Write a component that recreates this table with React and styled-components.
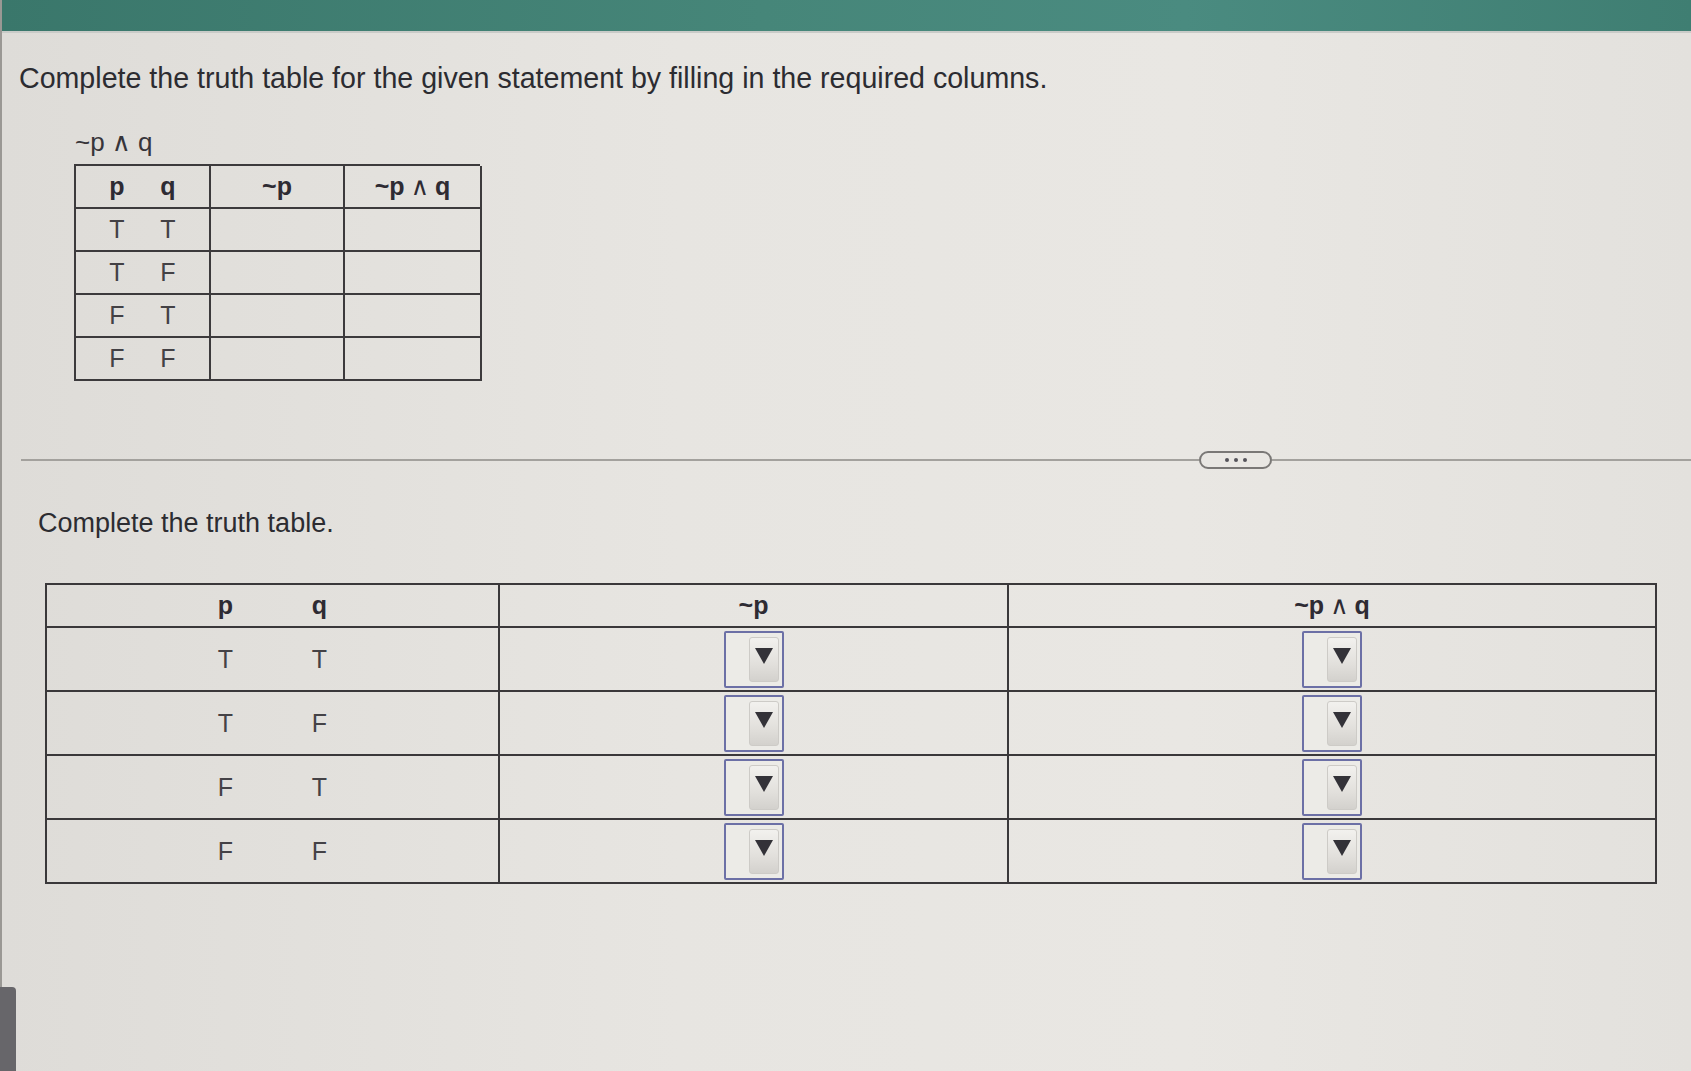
import React from "react";
import styled, { createGlobalStyle } from "styled-components";

const Global = createGlobalStyle`
  html, body { margin: 0; padding: 0; }
  body {
    background: #e5e3df;
    font-family: "Liberation Sans", "DejaVu Sans", Arial, sans-serif;
    color: #2f2f33;
    width: 1691px;
    height: 1071px;
    overflow: hidden;
  }
`;

const Page = styled.div`
  width: 1691px;
  height: 1071px;
  display: flex;
  flex-direction: column;
  background: linear-gradient(90deg, #dedcd8 0%, #e7e5e1 40%, #e9e7e3 70%, #e3e1dd 100%);
  border-left: 2px solid #9a9894;
  box-sizing: border-box;
`;

const TopBar = styled.div`
  height: 31px;
  flex: none;
  background: linear-gradient(90deg, #3a776b 0%, #468679 45%, #4a8b80 70%, #3f7e72 100%);
  border-bottom: 2px solid #c9cbc8;
`;

const Content = styled.div`
  display: flex;
  flex-direction: column;
  padding: 0 0 0 17px;
`;

const Title = styled.h1`
  margin: 29px 0 0 0;
  font-size: 28.6px;
  font-weight: 400;
  line-height: 32px;
  color: #2c2c31;
`;

const Formula = styled.div`
  margin: 34px 0 0 56px;
  font-size: 26px;
  line-height: 28px;
  color: #37353a;
`;

const SmallTable = styled.div`
  margin: 8px 0 0 55px;
  display: grid;
  grid-template-columns: 135px 134px 137px;
  width: 406px;
  border-top: 2px solid #3c3a3c;
  border-left: 2px solid #3c3a3c;
  box-sizing: border-box;
`;

const SCell = styled.div`
  height: 43px;
  display: flex;
  align-items: center;
  justify-content: center;
  border-right: 2px solid #3c3a3c;
  border-bottom: 2px solid #3c3a3c;
  box-sizing: border-box;
  font-size: 25px;
  font-weight: ${(p) => (p.$head ? 700 : 400)};
  color: ${(p) => (p.$head ? "#2e2b33" : "#434145")};
`;

const Wedge = styled.span`
  font-weight: 400;
  margin: 0 6px;
`;

const Pair = styled.div`
  display: flex;
  gap: ${(p) => p.$gap}px;
`;

const PairItem = styled.span`
  width: ${(p) => p.$w}px;
  text-align: center;
`;

const DividerRow = styled.div`
  margin: 70px 0 0 2px;
  display: flex;
  align-items: center;
`;

const Line = styled.div`
  height: 2px;
  background: #a3a19d;
  flex: ${(p) => (p.$grow ? 1 : "none")};
  width: ${(p) => (p.$w ? `${p.$w}px` : "auto")};
`;

const Pill = styled.div`
  width: 73px;
  height: 18px;
  border: 2px solid #7a7876;
  border-radius: 10px;
  box-sizing: border-box;
  display: flex;
  align-items: center;
  justify-content: center;
  gap: 5px;
  background: #e9e7e3;
`;

const Dot = styled.span`
  width: 4px;
  height: 4px;
  border-radius: 50%;
  background: #55535a;
`;

const SubTitle = styled.h2`
  margin: 39px 0 0 19px;
  font-size: 27px;
  font-weight: 400;
  line-height: 30px;
  color: #2c2c31;
`;

const BigTable = styled.div`
  margin: 45px 0 0 26px;
  width: 1612px;
  display: grid;
  grid-template-columns: 453px 509px 1fr;
  border-top: 2px solid #3a383a;
  border-left: 2px solid #3a383a;
  box-sizing: border-box;
`;

const BCell = styled.div`
  height: ${(p) => (p.$head ? 43 : 64)}px;
  display: flex;
  align-items: center;
  justify-content: center;
  border-right: 2px solid #3a383a;
  border-bottom: 2px solid #3a383a;
  box-sizing: border-box;
  font-size: 25px;
  font-weight: ${(p) => (p.$head ? 700 : 400)};
  color: ${(p) => (p.$head ? "#2e2b33" : "#444246")};
`;

const Select = styled.div`
  width: 60px;
  height: 57px;
  border: 2px solid #6c70a6;
  border-radius: 2px;
  box-sizing: border-box;
  background: #ecebe7;
  display: flex;
  align-items: center;
  justify-content: flex-end;
  padding-right: 3px;
`;

const SelectButton = styled.div`
  width: 30px;
  height: 45px;
  border-radius: 3px;
  border: 1px solid #cdcbc7;
  box-sizing: border-box;
  background: linear-gradient(180deg, #f2f1ee 0%, #e2e0dc 60%, #d3d1cd 100%);
  display: flex;
  align-items: flex-start;
  justify-content: center;
  padding-top: 9px;
`;

const SideTab = styled.div`
  position: fixed;
  left: 0;
  bottom: 0;
  width: 16px;
  height: 84px;
  background: #67666a;
  border-top-right-radius: 4px;
`;

const Arrow = () => (
  <svg width="20" height="18" viewBox="0 0 20 18">
    <polygon points="1,1 19,1 10,17" fill="#333238" />
  </svg>
);

const Dropdown = () => (
  <Select>
    <SelectButton>
      <Arrow />
    </SelectButton>
  </Select>
);

const rows = [
  ["T", "T"],
  ["T", "F"],
  ["F", "T"],
  ["F", "F"],
];

export default function App() {
  return (
    <>
      <Global />
      <Page>
        <TopBar />
        <Content>
          <Title>Complete the truth table for the given statement by filling in the required columns.</Title>
          <Formula>~p ∧ q</Formula>
          <SmallTable>
            <SCell $head>
              <Pair $gap={27}>
                <PairItem $w={24}>p</PairItem>
                <PairItem $w={24}>q</PairItem>
              </Pair>
            </SCell>
            <SCell $head>~p</SCell>
            <SCell $head>
              ~p<Wedge>∧</Wedge>q
            </SCell>
            {rows.map(([p, q], i) => (
              <React.Fragment key={i}>
                <SCell>
                  <Pair $gap={27}>
                    <PairItem $w={24}>{p}</PairItem>
                    <PairItem $w={24}>{q}</PairItem>
                  </Pair>
                </SCell>
                <SCell />
                <SCell />
              </React.Fragment>
            ))}
          </SmallTable>
          <DividerRow>
            <Line $w={1178} />
            <Pill>
              <Dot />
              <Dot />
              <Dot />
            </Pill>
            <Line $grow />
          </DividerRow>
          <SubTitle>Complete the truth table.</SubTitle>
          <BigTable>
            <BCell $head>
              <Pair $gap={54}>
                <PairItem $w={40}>p</PairItem>
                <PairItem $w={40}>q</PairItem>
              </Pair>
            </BCell>
            <BCell $head>~p</BCell>
            <BCell $head>
              ~p<Wedge>∧</Wedge>q
            </BCell>
            {rows.map(([p, q], i) => (
              <React.Fragment key={i}>
                <BCell>
                  <Pair $gap={54}>
                    <PairItem $w={40}>{p}</PairItem>
                    <PairItem $w={40}>{q}</PairItem>
                  </Pair>
                </BCell>
                <BCell>
                  <Dropdown />
                </BCell>
                <BCell>
                  <Dropdown />
                </BCell>
              </React.Fragment>
            ))}
          </BigTable>
        </Content>
        <SideTab />
      </Page>
    </>
  );
}
